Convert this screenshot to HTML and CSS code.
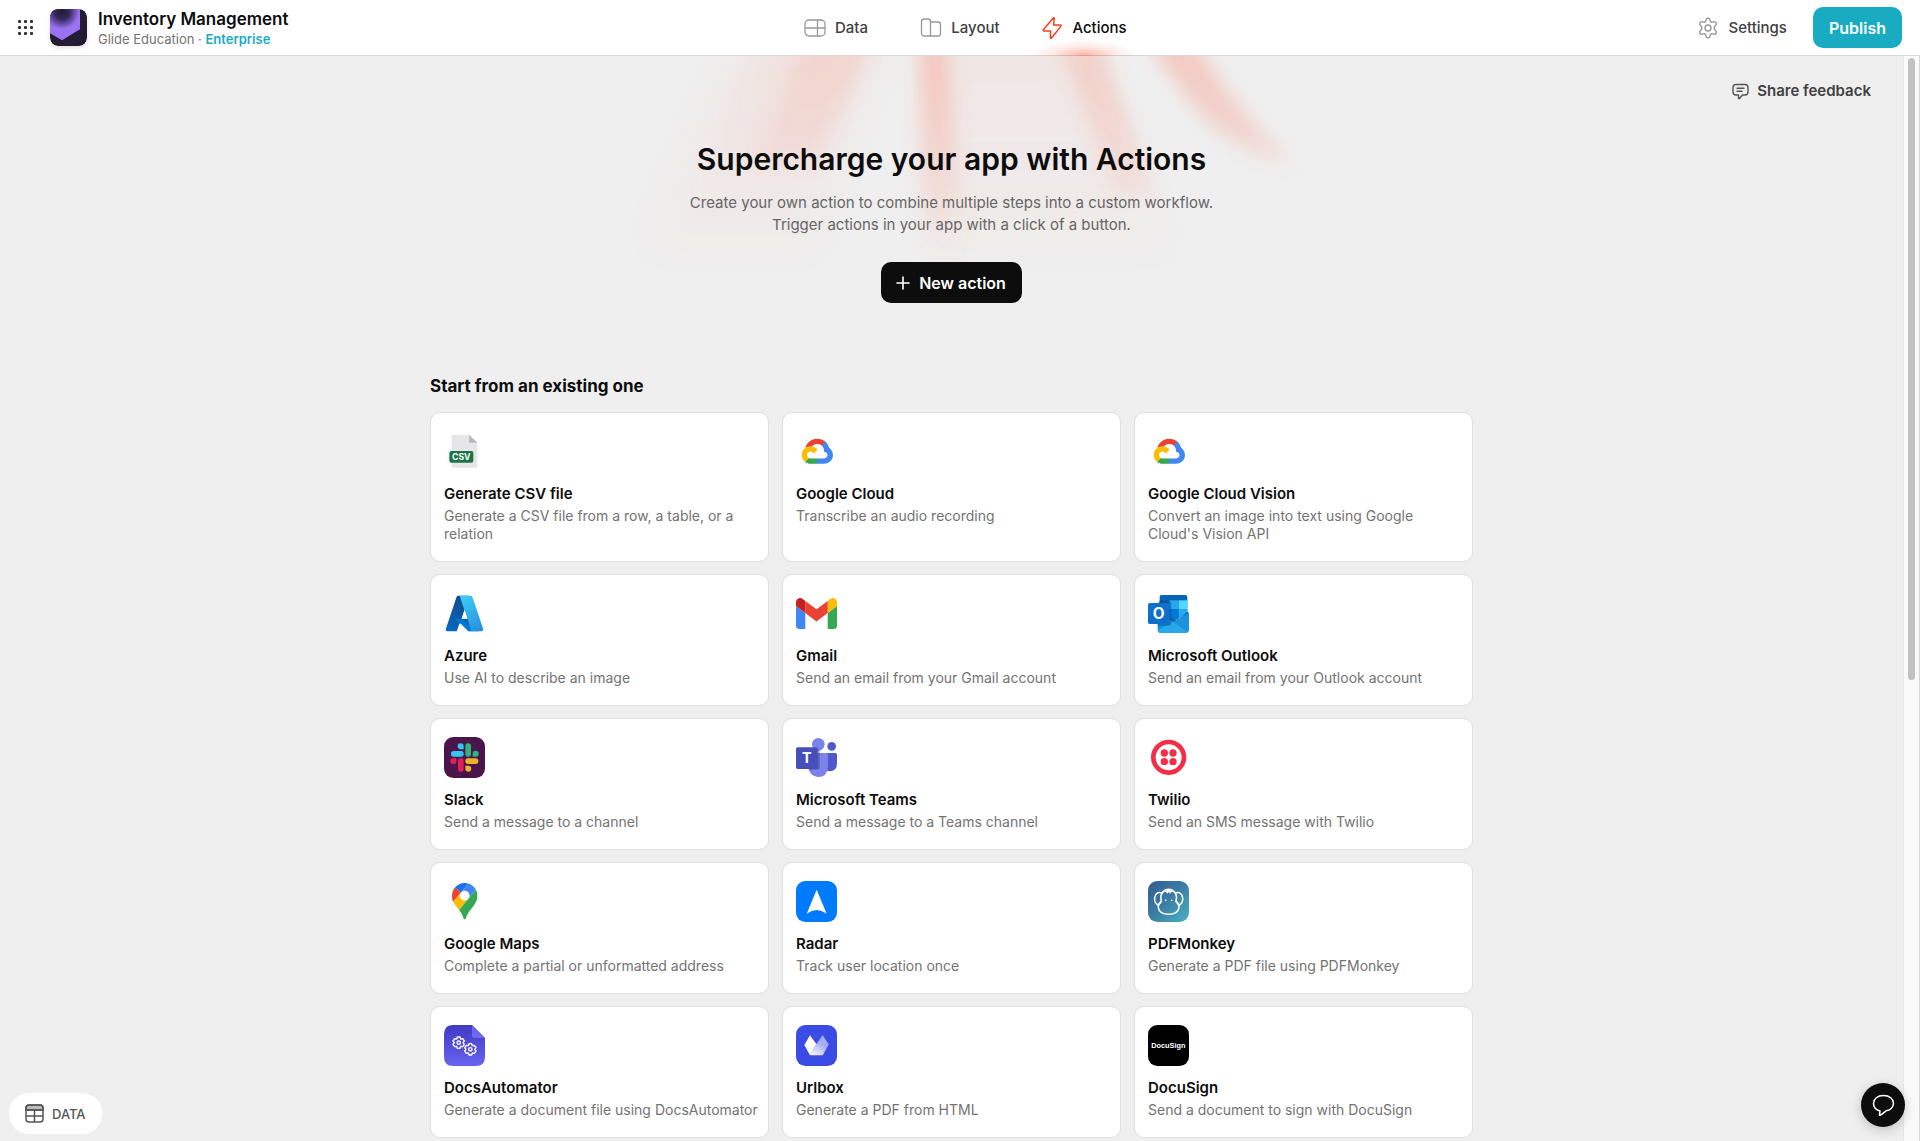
FILE: index.html
```html
<!DOCTYPE html>
<html lang="en">
<head>
  <meta charset="utf-8">
  <title>Inventory Management - Actions</title>
  <meta name="viewport" content="width=device-width, initial-scale=1">
  <link rel="stylesheet" href="styles.css">
</head>
<body>
<header class="topbar">
  <div class="app">
    <button class="icon-btn" aria-label="All apps">
      <svg width="16" height="16" viewBox="0 0 16 16" fill="#333">
        <rect x="0" y="0" width="3" height="3" rx="1"/><rect x="6" y="0" width="3" height="3" rx="1"/><rect x="12" y="0" width="3" height="3" rx="1"/>
        <rect x="0" y="6" width="3" height="3" rx="1"/><rect x="6" y="6" width="3" height="3" rx="1"/><rect x="12" y="6" width="3" height="3" rx="1"/>
        <rect x="0" y="12" width="3" height="3" rx="1"/><rect x="6" y="12" width="3" height="3" rx="1"/><rect x="12" y="12" width="3" height="3" rx="1"/>
      </svg>
    </button>
    <svg class="app-logo" width="37" height="37" viewBox="0 0 111 111">
      <defs>
        <radialGradient id="logo-shade" gradientUnits="userSpaceOnUse" cx="36" cy="8" r="52">
          <stop offset="0" stop-color="#1f1a33"/><stop offset=".45" stop-color="#352a5c"/><stop offset="1" stop-color="#9b72f2"/>
        </radialGradient>
      </defs>
      <rect width="111" height="111" rx="24" fill="#231d33"/>
      <path d="M0 22Q2 0 24 0H86Q90 0 90 4V61L36 94L0 73Z" fill="url(#logo-shade)"/>
    </svg>
    <div class="app-info">
      <div class="app-name">Inventory Management</div>
      <div class="app-team">Glide Education · <a href="#" class="plan">Enterprise</a></div>
    </div>
  </div>
  <nav class="tabs">
    <a href="#" class="tab">
      <svg width="22" height="22" viewBox="0 0 22 22" fill="none" stroke="#999" stroke-width="1.3">
        <rect x="1" y="3" width="20" height="16" rx="4"/><path d="M1 11H21M13.500 3V19"/>
      </svg>
      Data
    </a>
    <a href="#" class="tab">
      <svg width="22" height="22" viewBox="0 0 22 22" fill="none" stroke="#999" stroke-width="1.3">
        <path d="M10.500 19H4Q1.500 19 1.500 16.500V4.500Q1.500 2 4 2H8Q10.500 2 10.500 4.500Z"/>
        <path d="M10.500 5H18Q20.500 5 20.500 7.500V16.500Q20.500 19 18 19H10.500"/>
      </svg>
      Layout
    </a>
    <a href="#" class="tab active">
      <svg width="22" height="22" viewBox="0 0 22 22" fill="none" stroke="#f0401c" stroke-width="1.500" stroke-linejoin="round">
        <path d="M12.500 .800Q13.200 .400 13.200 1.300L12.600 8H19.200Q20.600 8.200 19.800 9.400L10.500 21Q9.400 21.900 9.300 20.600L9.700 14H3.200Q1.800 13.800 2.500 12.600Z"/>
      </svg>
      Actions
    </a>
  </nav>
  <div class="tools">
    <a href="#" class="settings">
      <svg width="22" height="22" viewBox="0 0 22 22" fill="none" stroke="#999" stroke-width="1.400" stroke-linejoin="round">
        <path d="M9.200 2.200Q9.400 1.200 11 1.200T12.800 2.200L13.400 4.600L14.700 5.400L17.100 4.700Q18.300 4.400 19.100 5.800T19 8L17.300 9.700V12.300L19 14Q19.900 14.800 19.100 16.200T17.100 17.300L14.700 16.600L13.400 17.400L12.800 19.800Q12.500 20.800 11 20.800T9.200 19.800L8.600 17.400L7.300 16.600L4.900 17.300Q3.700 17.600 2.900 16.200T3 14L4.700 12.300V9.700L3 8Q2.100 7.200 2.900 5.800T4.900 4.700L7.300 5.400L8.600 4.600Z"/>
        <circle cx="11" cy="11" r="3"/>
      </svg>
      Settings
    </a>
    <button class="btn publish">Publish</button>
  </div>
</header>

<div class="page">
  <main class="content">
    <svg class="rays" width="740" height="260" viewBox="0 0 740 260">
      <defs>
        <filter id="soft" x="-30%" y="-30%" width="160%" height="160%"><feGaussianBlur stdDeviation="9"/></filter>
        <filter id="softer" x="-40%" y="-30%" width="180%" height="160%"><feGaussianBlur stdDeviation="18"/></filter>
        <linearGradient id="ray" gradientUnits="userSpaceOnUse" x1="0" y1="0" x2="0" y2="210">
          <stop offset="0" stop-color="#ff6a4d" stop-opacity=".28"/>
          <stop offset=".4" stop-color="#ff6a4d" stop-opacity=".2"/>
          <stop offset="1" stop-color="#ff6a4d" stop-opacity="0"/>
        </linearGradient>
        <linearGradient id="haze" gradientUnits="userSpaceOnUse" x1="0" y1="0" x2="0" y2="220">
          <stop offset="0" stop-color="#ff6a4d" stop-opacity=".09"/>
          <stop offset="1" stop-color="#ff6a4d" stop-opacity=".02"/>
        </linearGradient>
      </defs>
      <g filter="url(#softer)" fill="url(#haze)">
        <path d="M160 -30H280L210 190H50Q90 80 160 -30Z"/>
        <path d="M330 -30H460L570 190H340Z" fill-opacity=".7"/>
      </g>
      <g filter="url(#soft)" fill="url(#ray)">
        <path d="M205 -20H275L215 110H150Z" fill-opacity=".45"/>
        <path d="M318 -20H346L362 200H322Z"/>
        <path d="M455 -20H498L555 140H515Z" fill-opacity=".75"/>
        <path d="M538 -30H584Q625 40 690 108Q650 100 606 66Q570 25 538 -30Z"/>
      </g>
    </svg>

    <a href="#" class="feedback">
      <svg width="17" height="17" viewBox="0 0 17 17" fill="none" stroke="#555" stroke-width="1.400" stroke-linejoin="round" stroke-linecap="round">
        <path d="M4 1.500H13Q16 1.500 16 4.500V9Q16 12 13 12H10.500L7.500 15.500Q6.500 16 6.500 15V12H4Q1 12 1 9V4.500Q1 1.500 4 1.500ZM5 5.200H12M5 8.300H10"/>
      </svg>
      Share feedback
    </a>

    <section class="hero">
      <h1>Supercharge your app with Actions</h1>
      <p>Create your own action to combine multiple steps into a custom workflow.<br>Trigger actions in your app with a click of a button.</p>
      <button class="btn new-action">
        <svg width="14" height="14" viewBox="0 0 14 14" stroke="#fff" stroke-width="1.600" stroke-linecap="round"><path d="M7 1V13M1 7H13"/></svg>
        New action
      </button>
    </section>

    <section class="templates">
      <h2>Start from an existing one</h2>
      <div class="grid">
        <a href="#" class="card">
          <svg class="card-icon" viewBox="0 0 123 123">
            <path d="M27 11H75L100 35V106Q100 110 96 110H27Q23 110 23 106V15Q23 11 27 11Z" fill="#e6e6e8"/>
            <path d="M75 11L100 35H75Z" fill="#b9b9bb"/>
            <rect x="16" y="60" width="72" height="35" rx="6" fill="#1c7547"/>
            <text class="logo-text" x="52" y="87" font-size="26" text-anchor="middle">CSV</text>
          </svg>
          <h3>Generate CSV file</h3>
          <p>Generate a CSV file from a row, a table, or a relation</p>
        </a>
        <a href="#" class="card">
          <svg class="card-icon" viewBox="0 0 123 123">
            <g id="gcloud" transform="translate(17 23) scale(.367)">
              <path fill="#ea4335" d="M170.300 56.800L192.500 34.600L194 25.200C153.400 -11.700 89 -7.500 52.400 33.900C42.300 45.400 34.700 59.800 30.700 74.600L38.700 73.400L83.200 66.100L86.600 62.600C106.400 40.900 139.900 37.900 162.800 56.400Z"/>
              <path fill="#4285f4" d="M224.200 73.900C219.100 55.100 208.600 38.100 194 25.200L162.800 56.400C175.900 67.200 183.500 83.400 183.100 100.500V106C198.500 106 210.900 118.500 210.900 133.800C210.900 149.200 198.500 161.300 183.100 161.300H127.500L122 167.200V200.600L127.500 205.800H183.100C223.100 206.100 255.700 174.300 256 134.400C256.200 110.200 244.300 87.500 224.200 73.900"/>
              <path fill="#34a853" d="M71.900 205.800H127.500V161.300H71.900C67.900 161.300 64 160.400 60.400 158.800L52.600 161.200L30.200 183.500L28.200 191C40.800 200.500 56.100 205.900 71.900 205.800"/>
              <path fill="#fbbc05" d="M71.900 61.400C31.900 61.700 -.200 94.200 0 134.200C.100 156.500 10.500 177.400 28.200 191L60.500 158.800C46.500 152.500 40.300 136 46.600 122C52.900 108 69.400 101.800 83.400 108.100C89.500 110.900 94.500 115.900 97.200 122L129.500 89.800C115.800 71.800 94.500 61.300 71.900 61.400"/>
            </g>
          </svg>
          <h3>Google Cloud</h3>
          <p>Transcribe an audio recording</p>
        </a>
        <a href="#" class="card">
          <svg class="card-icon" viewBox="0 0 123 123"><use href="#gcloud"/></svg>
          <h3>Google Cloud Vision</h3>
          <p>Convert an image into text using Google Cloud's Vision API</p>
        </a>

        <a href="#" class="card">
          <svg class="card-icon" viewBox="0 0 96 96">
            <defs>
              <linearGradient id="az1" x1=".7" y1="0" x2=".3" y2="1"><stop offset="0" stop-color="#114a8b"/><stop offset="1" stop-color="#0669bc"/></linearGradient>
              <linearGradient id="az2" x1=".3" y1="0" x2=".7" y2="1"><stop offset="0" stop-color="#3ccbf4"/><stop offset="1" stop-color="#2892df"/></linearGradient>
            </defs>
            <path fill="url(#az1)" d="M33.300 6.500H59.400L32.300 86.600A4.200 4.200 0 0 1 28.400 89.500H8.100A4.100 4.100 0 0 1 4.200 84L29.400 9.400A4.200 4.200 0 0 1 33.300 6.500Z"/>
            <path fill="#0078d4" d="M71.200 60.300H29.900A1.900 1.900 0 0 0 28.600 63.600L55.100 88.300A4.200 4.200 0 0 0 58 89.500H81.300Z"/>
            <path fill="#0f5fae" d="M40 60.300H58L64 78L50 68Z"/>
            <path fill="url(#az2)" d="M66.600 9.400A4.100 4.100 0 0 0 62.700 6.500H33.600A4.100 4.100 0 0 1 37.600 9.400L62.800 84A4.100 4.100 0 0 1 58.800 89.500H87.900A4.100 4.100 0 0 0 91.800 84Z"/>
            <path fill="#fff" d="M48 40L54.800 60.300H42Z"/>
            <path fill="#fff" d="M30 89.500L36 72Q38 70 40.500 73L55.100 88.300L56.500 89.500Z"/>
          </svg>
          <h3>Azure</h3>
          <p>Use AI to describe an image</p>
        </a>
        <a href="#" class="card">
          <svg class="card-icon" viewBox="52 31 88 88">
            <path fill="#4285f4" d="M58 108h14V74L52 59v43c0 3.320 2.690 6 6 6"/>
            <path fill="#34a853" d="M120 108h14c3.320 0 6-2.690 6-6V59l-20 15"/>
            <path fill="#fbbc04" d="M120 48v26l20-15v-8c0-7.420-8.470-11.650-14.400-7.200"/>
            <path fill="#ea4335" d="M72 74V48l24 18 24-18v26L96 92"/>
            <path fill="#c5221f" d="M52 51v8l20 15V48l-5.600-4.200c-5.940-4.450-14.400-.220-14.400 7.200"/>
          </svg>
          <h3>Gmail</h3>
          <p>Send an email from your Gmail account</p>
        </a>
        <a href="#" class="card">
          <svg class="card-icon" viewBox="0 0 123 123">
            <path fill="#0364b8" d="M40 6H112Q118 6 118 12V75H35V12Q35 6 40 6Z"/>
            <path fill="#0358a7" d="M35 22H64V75H35Z"/>
            <path fill="#28a8ea" d="M64 22H92V48H64Z"/><path fill="#50d9ff" d="M92 22H118V48H92Z"/>
            <path fill="#0078d4" d="M64 48H92V80H64Z"/><path fill="#28a8ea" d="M92 48H118V75H92Z"/>
            <path fill="#0a5eb0" d="M118 56L123 60L76 88L60 80L64 75L92 82Z"/>
            <path fill="#1490df" d="M123 60V108Q123 120 111 120H40Q29 120 29 110V66L76 88Z"/>
            <path fill="#28a8ea" d="M29 112L76 86L119 116Q116 120 111 120H38Q30 119 29 112Z"/>
            <path fill="#1a93dc" d="M123 60L76 88L119 116Q123 113 123 108Z"/>
            <path fill="#0a4f93" fill-opacity=".45" d="M35 25H64Q70 25 70 31V92Q70 98 64 98H29V30Z"/>
            <rect y="30" width="64" height="63" rx="5" fill="#0f6fcd"/>
            <text class="logo-text" x="32" y="78" font-size="46" text-anchor="middle">O</text>
          </svg>
          <h3>Microsoft Outlook</h3>
          <p>Send an email from your Outlook account</p>
        </a>

        <a href="#" class="card">
          <svg class="card-icon" viewBox="0 0 123 123">
            <rect width="123" height="123" rx="28" fill="#4a154b"/>
            <g fill="#36c5f0"><rect x="21" y="42" width="38" height="17" rx="8"/><path d="M59 37H51A9 9 0 1 1 59 28Z"/></g>
            <g fill="#2eb67d"><rect x="64" y="19" width="17" height="40" rx="8"/><path d="M86 59V51A9 9 0 1 1 94 59Z"/></g>
            <g fill="#ecb22e"><rect x="64" y="64" width="39" height="17" rx="8"/><path d="M64 86H72A9 9 0 1 1 64 94Z"/></g>
            <g fill="#e01e5a"><rect x="42" y="64" width="17" height="40" rx="8"/><path d="M37 64V72A9 9 0 1 1 29 64Z"/></g>
          </svg>
          <h3>Slack</h3>
          <p>Send a message to a channel</p>
        </a>
        <a href="#" class="card">
          <svg class="card-icon" viewBox="0 0 123 123">
            <circle cx="107" cy="28" r="13" fill="#5059c9"/>
            <path d="M88 48H118Q123 48 123 53V79Q123 103 101 103Q92 103 86 96Z" fill="#5059c9"/>
            <circle cx="67" cy="22" r="19" fill="#7b83eb"/>
            <path d="M40 48H91Q96 48 96 53V90Q94 120 66 120Q40 118 37 90V51Z" fill="#7b83eb"/>
            <path d="M37 36H65Q71 36 71 42V92Q71 98 65 98H38L37 90Z" fill="#343a90" fill-opacity=".5"/>
            <rect y="31" width="65" height="65" rx="5" fill="#464eb8"/>
            <text class="logo-text" x="32" y="79" font-size="43" text-anchor="middle">T</text>
          </svg>
          <h3>Microsoft Teams</h3>
          <p>Send a message to a Teams channel</p>
        </a>
        <a href="#" class="card">
          <svg class="card-icon" viewBox="0 0 123 123" fill="#f22f46">
            <circle cx="62" cy="61" r="46" fill="none" stroke="#f22f46" stroke-width="14"/>
            <circle cx="49" cy="48" r="11"/><circle cx="75" cy="48" r="11"/><circle cx="49" cy="74" r="11"/><circle cx="75" cy="74" r="11"/>
          </svg>
          <h3>Twilio</h3>
          <p>Send an SMS message with Twilio</p>
        </a>

        <a href="#" class="card">
          <svg class="card-icon" viewBox="0 0 123 123">
            <g transform="translate(24 6) scale(.824)">
              <path fill="#1a73e8" d="M60.200 2.200C55.800.800 51 0 46.100 0 32 0 19.300 6.400 10.800 16.500l21.800 18.300z"/>
              <path fill="#ea4335" d="M10.800 16.500C4.100 24.500 0 34.900 0 46.100c0 8.700 1.700 15.700 4.600 22l28-33.300z"/>
              <path fill="#4285f4" d="M46.200 28.500c9.800 0 17.700 7.900 17.700 17.700 0 4.300-1.600 8.300-4.200 11.400 0 0 13.900-16.600 27.500-32.700-5.600-10.800-15.300-19-27-22.700L32.600 34.800c3.300-3.800 8.100-6.300 13.600-6.300"/>
              <path fill="#fbbc04" d="M46.200 63.800c-9.800 0-17.700-7.900-17.700-17.700 0-4.300 1.500-8.300 4.100-11.300l-28 33.300c4.800 10.600 12.800 19.200 21 29.900l34.100-40.500c-3.300 3.900-8.100 6.300-13.500 6.300"/>
              <path fill="#34a853" d="M59.100 109.200c15.400-24.100 33.300-35 33.300-63 0-7.700-1.900-14.900-5.200-21.300L25.600 98c2.600 3.400 5.300 7.300 7.900 11.300 9.400 14.500 6.800 23.100 12.800 23.100s3.400-8.700 12.800-23.200"/>
            </g>
          </svg>
          <h3>Google Maps</h3>
          <p>Complete a partial or unformatted address</p>
        </a>
        <a href="#" class="card">
          <svg class="card-icon" viewBox="0 0 123 123">
            <rect width="123" height="123" rx="28" fill="#007aff"/>
            <path d="M62 26L92 98Q76 88 62 87Q47 88 32 98Z" fill="#fff"/>
          </svg>
          <h3>Radar</h3>
          <p>Track user location once</p>
        </a>
        <a href="#" class="card">
          <svg class="card-icon" viewBox="0 0 123 123">
            <defs><linearGradient id="pm" x1="0" y1="0" x2="1" y2="1"><stop offset="0" stop-color="#325a8f"/><stop offset=".5" stop-color="#3c7fa6"/><stop offset="1" stop-color="#4cb3c2"/></linearGradient></defs>
            <rect width="123" height="123" rx="28" fill="url(#pm)"/>
            <g fill="none" stroke="#fff" stroke-width="4.500" stroke-linejoin="round" stroke-linecap="round">
              <path d="M42 36Q24 30 20 50Q18 66 30 72Q36 66 40 60Q36 46 42 36Z"/>
              <path d="M82 36Q100 30 104 50Q106 66 94 72Q88 66 84 60Q88 46 82 36Z"/>
              <path d="M40 62Q30 70 31 80Q34 100 62 100Q90 100 93 80Q94 70 84 62"/>
              <path d="M42 36Q50 25 62 25Q74 25 82 36"/>
            </g>
            <path fill="#fff" d="M44 36Q52 26 62 26Q72 26 80 36Q74 32 69 34L66 38L62 33L58 38L55 34Q50 32 44 36Z"/>
            <circle cx="53" cy="58" r="2.500" fill="#fff"/><circle cx="71" cy="58" r="2.500" fill="#fff"/>
          </svg>
          <h3>PDFMonkey</h3>
          <p>Generate a PDF file using PDFMonkey</p>
        </a>

        <a href="#" class="card">
          <svg class="card-icon" viewBox="0 0 123 123">
            <defs>
              <linearGradient id="da" x1="0" y1="0" x2="0" y2="1"><stop offset="0" stop-color="#4239c2"/><stop offset="1" stop-color="#6763f0"/></linearGradient>
              <path id="cog" d="M-4 -17H4L6 -11L12 -12L17 -5L13 0L17 5L12 12L6 11L4 17H-4L-6 11L-12 12L-17 5L-13 0L-17 -5L-12 -12L-6 -11Z"/>
            </defs>
            <path d="M28 0H84L123 39V95Q123 123 95 123H28Q0 123 0 95V28Q0 0 28 0Z" fill="url(#da)"/>
            <path d="M84 0L123 39H90Q84 39 84 33Z" fill="#6f68ee"/>
            <g fill="none" stroke="#fff" stroke-width="4" stroke-linejoin="round">
              <use href="#cog" x="44" y="53"/><circle cx="44" cy="53" r="5"/>
              <use href="#cog" x="79" y="73"/><circle cx="79" cy="73" r="5"/>
            </g>
          </svg>
          <h3>DocsAutomator</h3>
          <p>Generate a document file using DocsAutomator</p>
        </a>
        <a href="#" class="card">
          <svg class="card-icon" viewBox="0 0 123 123">
            <defs><linearGradient id="ub" x1="0" y1="1" x2="1" y2="0"><stop offset="0" stop-color="#fff"/><stop offset="1" stop-color="#8f9bf5"/></linearGradient></defs>
            <rect width="123" height="123" rx="28" fill="#3b4be6"/>
            <path d="M80 31L98 58L80 90H64L61 57Z" fill="#a5aef7"/>
            <path d="M61 57H98L80 91H42Z" fill="url(#ub)"/>
            <path d="M42 31L61 57L42 91L25 60Z" fill="#fff"/>
          </svg>
          <h3>Urlbox</h3>
          <p>Generate a PDF from HTML</p>
        </a>
        <a href="#" class="card">
          <svg class="card-icon" viewBox="0 0 123 123">
            <rect width="123" height="123" rx="28" fill="#000"/>
            <text class="logo-text docusign" x="61" y="68" font-size="22" text-anchor="middle">DocuSign</text>
          </svg>
          <h3>DocuSign</h3>
          <p>Send a document to sign with DocuSign</p>
        </a>
      </div>
    </section>
  </main>
  <div class="scrollbar"><div class="thumb"></div></div>
</div>

<button class="data-pill">
  <svg width="19" height="19" viewBox="0 0 19 19" fill="none" stroke="#555" stroke-width="1.500">
    <path d="M1 6V4Q1 1 4 1H15Q18 1 18 4V6Z" fill="#bbb"/>
    <rect x="1" y="1" width="17" height="17" rx="3"/><path d="M1 6H18M1 12H18M9.500 6V18"/>
  </svg>
  DATA
</button>
<button class="chat" aria-label="Open chat">
  <svg width="23" height="23" viewBox="0 0 23 23" fill="none" stroke="#fff" stroke-width="1.500" stroke-linejoin="round">
    <path d="M11.500 1.500C17.500 1.500 21.500 5 21.500 9.300C21.500 13.500 18 16.300 14 16.800C12 18.500 10 20.500 8 21.300Q7.400 21.500 7.500 20.700L8 16.900C4 16 1.500 13 1.500 9.300C1.500 5 5.500 1.500 11.500 1.500Z"/>
  </svg>
</button>
</body>
</html>
```

FILE: styles.css
```css
* {
  box-sizing: border-box;
  margin: 0;
  padding: 0;
}

body {
  display: flex;
  flex-direction: column;
  height: 100vh;
  overflow: hidden;
  background: #efefef;
  color: #0d0d0d;
  font-family: Inter, "Liberation Sans", sans-serif;
  font-size: 15px;
}

a {
  color: inherit;
  text-decoration: none;
}

button {
  border: none;
  background: none;
  font: inherit;
  cursor: pointer;
}

svg {
  display: block;
  flex: none;
}

/* top bar */
.topbar {
  display: grid;
  grid-template-columns: 1fr auto 1fr;
  align-items: center;
  height: 56px;
  padding: 0 18px;
  background: #fff;
  border-bottom: 1px solid #d6d6d6;
}

.app {
  display: flex;
  align-items: center;
}

.icon-btn {
  margin-right: 16px;
}

.app-logo {
  border-radius: 8px;
  box-shadow: 0 2px 4px rgba(0, 0, 0, 0.12);
}

.app-info {
  margin-left: 11px;
}

.app-name {
  font-size: 17px;
  font-weight: 600;
  line-height: 22px;
}

.app-team {
  color: #737373;
  font-size: 13px;
  line-height: 18px;
}

.plan {
  color: #18abc2;
  font-weight: 600;
}

.tabs {
  display: flex;
  height: 55px;
}

.tab {
  position: relative;
  display: flex;
  align-items: center;
  justify-content: center;
  gap: 9px;
  width: 124px;
  color: #404040;
  font-weight: 500;
}

.active {
  color: #0d0d0d;
}

.active::after {
  content: "";
  position: absolute;
  left: 8px;
  right: 8px;
  bottom: -1px;
  height: 16px;
  background: radial-gradient(ellipse 50% 100% at 50% 100%, rgba(240, 64, 28, 0.4), rgba(240, 64, 28, 0.1) 60%, rgba(240, 64, 28, 0));
}

.tools {
  display: flex;
  align-items: center;
  justify-content: flex-end;
  gap: 26px;
}

.settings {
  display: flex;
  align-items: center;
  gap: 9px;
  color: #404040;
  font-weight: 500;
}

.btn {
  height: 41px;
  border-radius: 10px;
  color: #fff;
  font-size: 16px;
  font-weight: 600;
}

.publish {
  padding: 0 16px;
  background: #18abc2;
}

/* page */
.page {
  display: flex;
  flex: 1;
  min-height: 0;
}

.content {
  position: relative;
  flex: 1;
  overflow: hidden;
}

.rays {
  position: absolute;
  top: 0;
  left: 50%;
  margin-left: -351px;
}

.feedback {
  position: absolute;
  top: 24px;
  right: 32px;
  display: flex;
  align-items: center;
  gap: 8px;
  color: #404040;
  font-weight: 600;
  line-height: 22px;
}

.hero {
  position: relative;
  display: flex;
  flex-direction: column;
  align-items: center;
  padding-top: 83px;
  text-align: center;
}

h1 {
  font-size: 30px;
  font-weight: 600;
  line-height: 40px;
}

.hero p {
  margin: 13px 0 26px;
  color: #666;
  line-height: 22px;
}

.new-action {
  display: flex;
  align-items: center;
  gap: 9px;
  padding: 0 16px 0 15px;
  background: #0d0d0d;
}

.templates {
  position: relative;
  width: 1043px;
  max-width: 100%;
  margin: 0 auto;
  padding-top: 72px;
}

h2 {
  margin-bottom: 15px;
  font-size: 17px;
  font-weight: 700;
  line-height: 22px;
}

.grid {
  display: grid;
  grid-template-columns: repeat(3, 1fr);
  gap: 12px 13px;
}

.card {
  padding: 18px 10px 18px 13px;
  background: #fff;
  border: 1px solid #e0e0e0;
  border-radius: 10px;
}

.card-icon {
  width: 41px;
  height: 41px;
  margin-bottom: 11px;
}

.card h3 {
  font-size: 15px;
  font-weight: 600;
  line-height: 22px;
}

.card p {
  margin-top: 2px;
  color: #737373;
  font-size: 14px;
  line-height: 18px;
}

.logo-text {
  fill: #fff;
  font-family: Inter, sans-serif;
  font-weight: 700;
}

.docusign {
  font-family: "Liberation Sans", Arial, sans-serif;
}

.scrollbar {
  width: 17px;
  padding: 2px 4px;
  background: #fafafa;
  border-left: 1px solid #e8e8e8;
  border-right: 1px solid #d6d6d6;
}

.thumb {
  height: 57.5%;
  border-radius: 5px;
  background: #c1c1c1;
}

/* floating controls */
.data-pill {
  position: fixed;
  left: 9px;
  bottom: 7px;
  display: flex;
  align-items: center;
  gap: 8px;
  height: 41px;
  padding: 0 16px;
  border-radius: 20px;
  background: #fff;
  color: #555;
  font-size: 13px;
  font-weight: 500;
}

.chat {
  position: fixed;
  right: 15px;
  bottom: 14px;
  display: flex;
  align-items: center;
  justify-content: center;
  width: 44px;
  height: 44px;
  border-radius: 50%;
  background: #0d0d0d;
  box-shadow: 0 3px 12px rgba(0, 0, 0, 0.2);
}
```
